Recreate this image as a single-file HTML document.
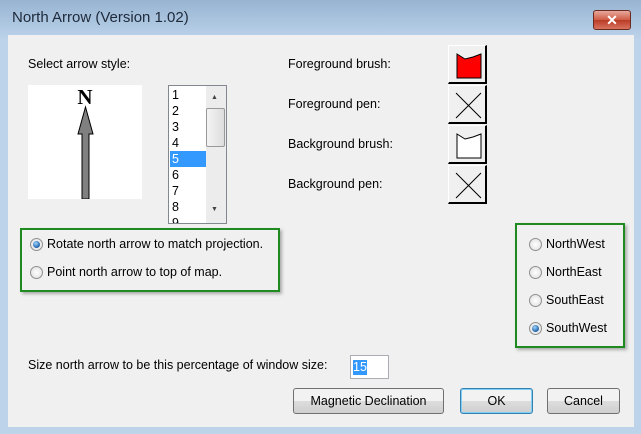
<!DOCTYPE html>
<html><head><style>
body{margin:0;width:641px;height:434px;overflow:hidden;font-family:"Liberation Sans",sans-serif;font-size:12px;color:#000;position:relative;background:linear-gradient(#98b4d2,#bcd3ea 40px,#bcd3ea);}
.a{position:absolute;}
.client{left:8px;top:35px;width:626px;height:392px;background:#f0f0f0;}
.btn{position:absolute;border:1px solid #707070;border-radius:3px;background:linear-gradient(#f2f2f2 50%,#dddddd 50%,#cfcfcf);text-align:center;line-height:24px;font-size:12.5px;box-sizing:border-box;height:26px;}
.rb{position:absolute;width:13px;height:13px;border-radius:50%;border:1px solid #8e8f8f;background:radial-gradient(#fff,#dcdcdc);box-sizing:border-box;}
.rb.on::after{content:"";position:absolute;left:2px;top:2px;width:7px;height:7px;border-radius:50%;background:radial-gradient(circle at 40% 35%,#9fd6ff,#1d5ea6 70%);}
.lbl{position:absolute;font-size:12.5px;}
.sb{position:absolute;left:448px;width:39px;height:39px;background:#f0f0f0;border-right:2px solid #000;border-bottom:2px solid #000;box-sizing:border-box;border-top:1px solid #fff;border-left:1px solid #fff;}
</style></head><body>
<div class="a" style="left:12px;top:9px;font-size:15px;color:#1e2a3a">North Arrow (Version 1.02)</div>
<div class="a" style="left:593px;top:10px;width:38px;height:20px;border:1px solid #6b2a20;border-radius:3px;box-sizing:border-box;background:linear-gradient(#e6a99c,#cf5b45 50%,#b93a25 50%,#d8735e);color:#fff;font-weight:bold;text-align:center;line-height:18px;font-size:14px;">✕</div>
<div class="a client"></div>
<div class="lbl" style="left:28px;top:57px">Select arrow style:</div>
<div class="a" style="left:28px;top:85px;width:114px;height:114px;background:#fff;">
<svg width="114" height="114"><text x="57" y="19" text-anchor="middle" font-family="Liberation Serif" font-weight="bold" font-size="21">N</text>
<polygon points="57.5,22 65,49 61,49 61,114 54,114 54,49 50,49" fill="#808080" stroke="#000" stroke-width="1"/></svg></div>
<div class="a" style="left:168px;top:85px;width:59px;height:139px;border:1px solid #828790;background:#fff;box-sizing:border-box;overflow:hidden;font-size:12.5px">
<div style="position:absolute;left:3px;top:1px;line-height:16px">1<br>2<br>3<br>4<br><br>6<br>7<br>8<br>9</div>
<div style="position:absolute;left:1px;top:65px;width:35px;height:16px;background:#3399ff;color:#fff;padding-left:2px;line-height:16px">5</div>
<div style="position:absolute;left:37px;top:0;width:20px;height:137px;background:#ececec;">
<div style="position:absolute;left:0;top:22px;width:17px;height:37px;border:1px solid #999;border-radius:2px;background:linear-gradient(90deg,#f4f4f4,#ddd);"></div>
<div style="position:absolute;left:5px;top:8px;font-size:7px;color:#444">▲</div>
<div style="position:absolute;left:5px;top:120px;font-size:7px;color:#444">▼</div></div></div>
<div class="lbl" style="left:288px;top:57px">Foreground brush:</div>
<div class="lbl" style="left:288px;top:97px">Foreground pen:</div>
<div class="lbl" style="left:288px;top:137px">Background brush:</div>
<div class="lbl" style="left:288px;top:177px">Background pen:</div>
<div class="sb" style="top:45px"><svg width="37" height="37"><polygon points="8,8 16,13 24,11 32,8 32,32 8,32" fill="#f00" stroke="#000"/></svg></div>
<div class="sb" style="top:85px"><svg width="37" height="37"><path d="M7,7L32,32M32,7L7,32" stroke="#000"/></svg></div>
<div class="sb" style="top:125px"><svg width="37" height="37"><polygon points="8,8 16,13 24,11 32,8 32,32 8,32" fill="#fff" stroke="#000"/></svg></div>
<div class="sb" style="top:165px"><svg width="37" height="37"><path d="M7,7L32,32M32,7L7,32" stroke="#000"/></svg></div>
<div class="a" style="left:20px;top:228px;width:260px;height:64px;border:2px solid #1f8a1f;box-sizing:border-box;box-shadow:2px 2px 3px #aaa;"></div>
<div class="rb on" style="left:30px;top:238px"></div><div class="lbl" style="left:47px;top:237px">Rotate north arrow to match projection.</div>
<div class="rb" style="left:30px;top:266px"></div><div class="lbl" style="left:47px;top:265px">Point north arrow to top of map.</div>
<div class="a" style="left:515px;top:223px;width:110px;height:125px;border:2px solid #1f8a1f;box-sizing:border-box;box-shadow:2px 2px 3px #aaa;"></div>
<div class="rb" style="left:529px;top:238px"></div><div class="lbl" style="left:546px;top:237px">NorthWest</div>
<div class="rb" style="left:529px;top:266px"></div><div class="lbl" style="left:546px;top:265px">NorthEast</div>
<div class="rb" style="left:529px;top:294px"></div><div class="lbl" style="left:546px;top:293px">SouthEast</div>
<div class="rb on" style="left:529px;top:322px"></div><div class="lbl" style="left:546px;top:321px">SouthWest</div>
<div class="lbl" style="left:28px;top:358px">Size north arrow to be this percentage of window size:</div>
<div class="a" style="left:350px;top:355px;width:39px;height:24px;border:1px solid #abadb3;background:#fff;box-sizing:border-box;"><span style="position:absolute;left:2px;top:4px;background:#3399ff;color:#fff;font-size:12.5px;line-height:15px">15</span></div>
<div class="btn" style="left:293px;top:388px;width:151px">Magnetic Declination</div>
<div class="btn" style="left:460px;top:388px;width:73px;border-color:#3c7fb1;box-shadow:inset 0 0 0 1px #7ad0f5">OK</div>
<div class="btn" style="left:547px;top:388px;width:73px">Cancel</div>
</body></html>
